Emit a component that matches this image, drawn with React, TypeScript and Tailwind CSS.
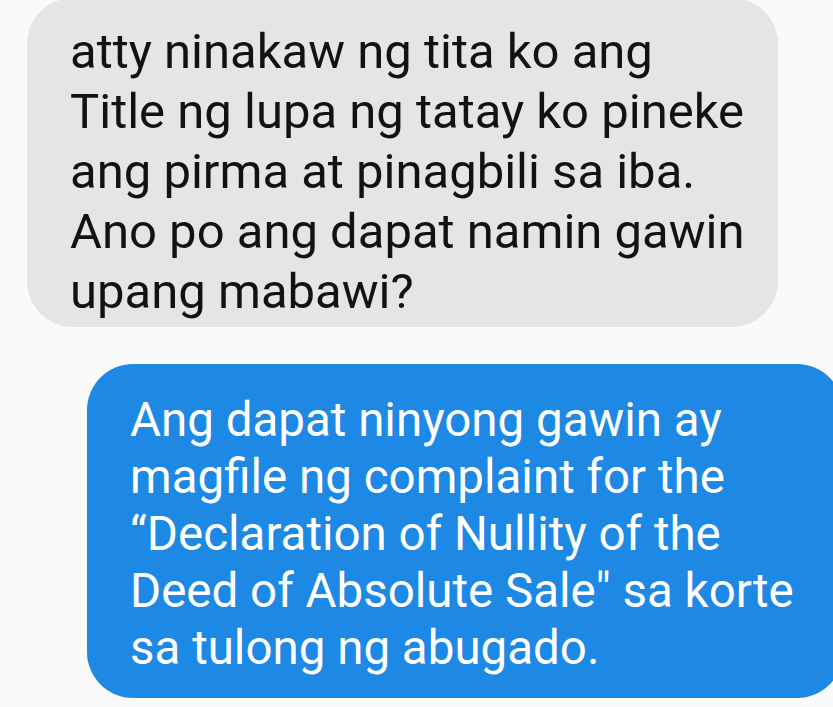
export default function App() {
  return (
    <div
      className="w-[833px] h-[707px] overflow-hidden bg-[#fafafa]"
      style={{ fontFamily: 'Roboto, "Noto Sans", sans-serif' }}
    >
      <div className="-mt-[2px] ml-[27px] w-[751px] h-[329px] rounded-[46px] bg-[#e5e5e5] pl-[43px] pt-[24px] text-[49px] leading-[60px] text-[#121212]">
        atty ninakaw ng tita ko ang
        <br />
        Title ng lupa ng tatay ko pineke
        <br />
        ang pirma at pinagbili sa iba.
        <br />
        Ano po ang dapat namin gawin
        <br />
        upang mabawi?
      </div>
      <div className="mt-[37px] ml-[87px] w-[756px] h-[334px] rounded-[46px] bg-[#1e88e5] pl-[43px] pt-[28px] text-[47.5px] leading-[57px] text-white">
        Ang dapat ninyong gawin ay
        <br />
        magfile ng complaint for the
        <br />
        “Declaration of Nullity of the
        <br />
        Deed of Absolute Sale" sa korte
        <br />
        sa tulong ng abugado.
      </div>
    </div>
  )
}
